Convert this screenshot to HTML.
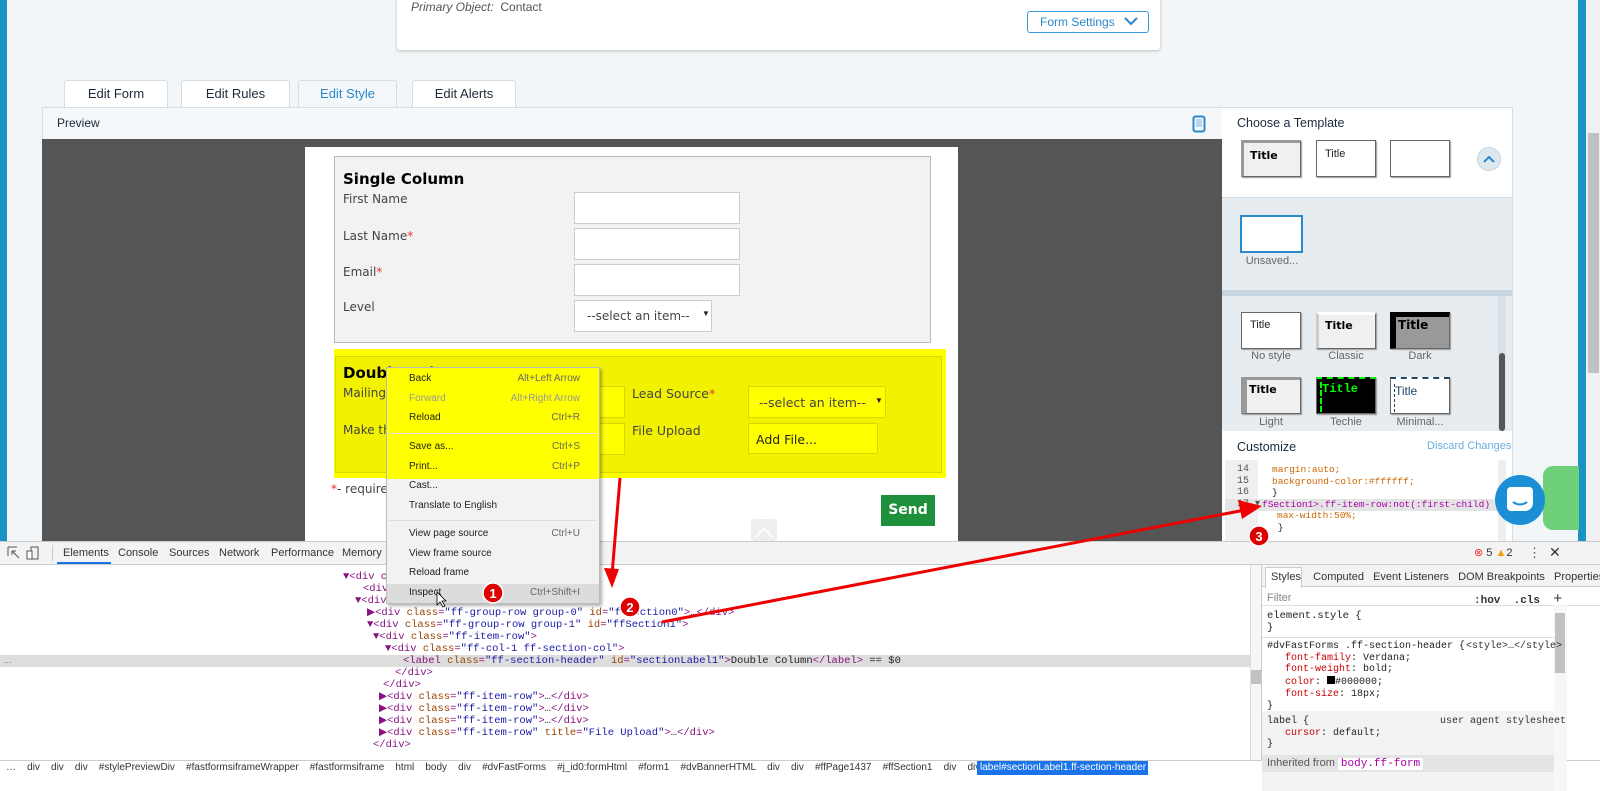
<!DOCTYPE html>
<html><head><meta charset="utf-8"><style>
*{box-sizing:border-box;margin:0;padding:0}
body{width:1600px;height:791px;overflow:hidden;position:relative;background:#f3f6f8;font-family:"Liberation Sans",sans-serif;font-size:12px;color:#222}
.a{position:absolute}
.t{position:absolute;white-space:nowrap}
.tab{position:absolute;top:80px;height:27px;background:#fff;border:1px solid #d5dde3;border-bottom:none;border-radius:3px 3px 0 0;text-align:center;line-height:26px;font-size:13px;color:#1a2a3a}
.inp{position:absolute;background:#fff;border:1px solid #ccc;height:32px}
.fl{position:absolute;font-family:"DejaVu Sans",sans-serif;font-size:12px;color:#444}
.req{color:#e33}
.th{position:absolute;width:60px;height:37px;background:#fff;border:1px solid #666;box-shadow:1px 1px 1px #999;font-size:11px}
.lbl{position:absolute;width:80px;text-align:center;font-size:11px;color:#666}
.mi{position:absolute;left:23px;font-size:10px;color:#222}
.ms{position:absolute;right:20px;font-size:10px;color:#666}
.dom{position:absolute;font-family:"Liberation Mono",monospace;font-size:10.5px;white-space:nowrap;color:#881280}
.dom div{height:12px;line-height:12px}
.dom .at{color:#994500}.dom .v{color:#1a1aa6}.dom .x{color:#222}
.st{position:absolute;font-family:"Liberation Mono",monospace;font-size:10.5px;white-space:nowrap;color:#222}
.p{color:#c80000}
.dt{position:absolute;top:547px;font-size:11px;color:#333}
</style></head><body>
<div class="a" style="left:0;top:0;width:7px;height:541px;background:#1a94c4"></div>
<div class="a" style="left:1578px;top:0;width:8px;height:541px;background:#1a94c4"></div>
<div class="a" style="left:1587px;top:0;width:13px;height:541px;background:#f0f0f0"></div>
<div class="a" style="left:1588px;top:133px;width:11px;height:240px;background:#c1c1c1"></div>

<!-- top card -->
<div class="a" style="left:397px;top:-4px;width:763px;height:54px;background:#fff;box-shadow:0 1px 3px #bbb;border-radius:3px"></div>
<div class="t" style="left:411px;top:0;font-size:12px;color:#555"><i>Primary Object:</i>&nbsp; Contact</div>
<div class="a" style="left:1027px;top:11px;width:122px;height:22px;border:1px solid #3a9ad9;border-radius:3px;color:#2a88cc;font-size:12px;line-height:20px;padding-left:12px;background:#fff">Form Settings <svg class="a" style="left:96px;top:4px" width="14" height="10"><path d="M1 2 L7 8 L13 2" stroke="#2a88cc" stroke-width="2" fill="none"/></svg></div>

<div class="tab" style="left:64px;width:104px">Edit Form</div>
<div class="tab" style="left:181px;width:109px">Edit Rules</div>
<div class="tab" style="left:298px;width:99px;color:#2a88cc;background:#f5f8fa;height:28px">Edit Style</div>
<div class="tab" style="left:412px;width:104px">Edit Alerts</div>

<!-- main panel -->
<div class="a" style="left:42px;top:107px;width:1471px;height:434px;background:#f5f8fa;border:1px solid #d5dde3"></div>
<div class="t" style="left:57px;top:116px;font-size:12px;color:#1a2a3a">Preview</div>
<svg class="a" style="left:1192px;top:115px" width="14" height="18"><rect x="1.5" y="1.5" width="11" height="15" rx="2" fill="none" stroke="#2a88cc" stroke-width="2"/><rect x="4" y="4" width="6" height="8" fill="#2a88cc" opacity=".3"/></svg>
<div class="a" style="left:42px;top:139px;width:1180px;height:402px;background:#555"></div>
<div class="a" style="left:305px;top:147px;width:653px;height:394px;background:#fff"></div>

<div class="a" style="left:334px;top:156px;width:597px;height:187px;background:#f2f2f2;border:1px solid #bbb"></div>
<div class="t" style="left:343px;top:170px;font-family:'DejaVu Sans',sans-serif;font-weight:bold;font-size:15px;color:#000">Single Column</div>
<div class="fl" style="left:343px;top:192px">First Name</div>
<div class="fl" style="left:343px;top:229px">Last Name<span class="req">*</span></div>
<div class="fl" style="left:343px;top:265px">Email<span class="req">*</span></div>
<div class="fl" style="left:343px;top:300px">Level</div>
<div class="inp" style="left:574px;top:192px;width:166px"></div>
<div class="inp" style="left:574px;top:228px;width:166px"></div>
<div class="inp" style="left:574px;top:264px;width:166px"></div>
<div class="inp" style="left:574px;top:300px;width:138px"><span class="fl" style="left:12px;top:8px">--select an item--</span><span class="a" style="left:127px;top:8px;font-size:8px">▼</span></div>

<!-- yellow section -->
<div class="a" style="left:334px;top:349px;width:612px;height:129px;background:#ffff00"></div>
<div class="a" style="left:335px;top:356px;width:607px;height:117px;background:#f2f200;border:1px solid #d8d800"></div>
<div class="t" style="left:343px;top:364px;font-family:'DejaVu Sans',sans-serif;font-weight:bold;font-size:15px;color:#000">Double Column</div>
<div class="fl" style="left:343px;top:386px">Mailing</div>
<div class="fl" style="left:343px;top:423px">Make th</div>
<div class="inp" style="left:570px;top:386px;width:55px;background:#ffff00;border-color:#d8d800"></div>
<div class="inp" style="left:570px;top:423px;width:55px;background:#ffff00;border-color:#d8d800"></div>
<div class="fl" style="left:632px;top:386px;font-size:12.5px">Lead Source<span class="req">*</span></div>
<div class="fl" style="left:632px;top:423px;font-size:12.5px">File Upload</div>
<div class="inp" style="left:748px;top:386px;width:138px;background:#ffff00;border-color:#d8d800"><span class="fl" style="left:10px;top:8px;font-size:12.5px">--select an item--</span><span class="a" style="left:126px;top:9px;font-size:8px">▼</span></div>
<div class="inp" style="left:748px;top:423px;width:130px;height:31px;background:#ffff00;border-color:#d8d800"><span class="fl" style="left:7px;top:8px;font-size:12.5px;color:#222">Add File...</span></div>
<div class="fl" style="left:331px;top:482px"><span class="req">*</span>- required</div>
<div class="a" style="left:881px;top:495px;width:54px;height:31px;background:#1e8f3a;color:#fff;font-weight:bold;font-size:14px;text-align:center;line-height:31px;font-family:'DejaVu Sans',sans-serif">Send</div>
<div class="a" style="left:751px;top:519px;width:26px;height:22px;background:#eee;border-radius:3px"><svg width="26" height="22"><path d="M5 18 L13 9 L21 18" stroke="#fff" stroke-width="2" fill="none"/></svg></div>

<!-- right panel -->
<div class="a" style="left:1222px;top:108px;width:290px;height:89px;background:#fff"></div>
<div class="t" style="left:1237px;top:116px;font-size:12.5px;color:#1a2a3a">Choose a Template</div>
<div class="th" style="left:1241px;top:140px;background:#f0f0f0;border-top:3px solid #999;border-left:3px solid #999"><b style="position:absolute;left:6px;top:6px;font-family:'DejaVu Sans';color:#000">Title</b></div>
<div class="th" style="left:1316px;top:140px"><span style="position:absolute;left:8px;top:7px">Title</span></div>
<div class="th" style="left:1390px;top:140px"></div>
<div class="a" style="left:1477px;top:147px;width:24px;height:24px;border-radius:50%;background:#dde8ef;border:1px solid #c8d4dc"><svg width="22" height="22"><path d="M6 14 L11 9 L16 14" stroke="#2a88cc" stroke-width="2" fill="none"/></svg></div>
<div class="a" style="left:1222px;top:197px;width:290px;height:93px;background:#e6ecf0;border-top:1px solid #d0dce4"></div>
<div class="a" style="left:1240px;top:215px;width:63px;height:38px;background:#fff;border:2px solid #2a88cc"></div>
<div class="lbl" style="left:1232px;top:255px">Unsaved...</div>
<div class="a" style="left:1222px;top:290px;width:290px;height:6px;background:#c6d5df"></div>
<div class="a" style="left:1222px;top:296px;width:290px;height:135px;background:#e6ecf0"></div>
<div class="a" style="left:1498px;top:296px;width:8px;height:135px;background:#d8e2e8"></div>
<div class="a" style="left:1499px;top:353px;width:6px;height:78px;background:#555;border-radius:3px"></div>
<div class="th" style="left:1241px;top:312px"><span style="position:absolute;left:8px;top:6px">Title</span></div>
<div class="th" style="left:1316px;top:312px;background:#f0f0f0;border-top:3px solid #fff;border-left:3px solid #ccc"><b style="position:absolute;left:6px;top:4px;font-family:'DejaVu Sans';color:#000">Title</b></div>
<div class="th" style="left:1390px;top:312px;background:#999;border-top:5px solid #000;border-left:6px solid #000"><b style="position:absolute;left:2px;top:1px;font-family:'DejaVu Sans';color:#000;font-size:12px">Title</b></div>
<div class="lbl" style="left:1231px;top:350px">No style</div>
<div class="lbl" style="left:1306px;top:350px">Classic</div>
<div class="lbl" style="left:1380px;top:350px">Dark</div>
<div class="th" style="left:1241px;top:377px;background:#f0f0f0;border-top:3px solid #999;border-left:6px solid #999"><b style="position:absolute;left:2px;top:3px;font-family:'DejaVu Sans';color:#000">Title</b></div>
<div class="th" style="left:1316px;top:377px;background:#000;border-top:2px dashed #0f0"><b style="position:absolute;left:3px;top:3px;font-family:'Liberation Mono';color:#0f0;font-size:12px;border-left:2px dashed #0f0;height:30px">Title</b></div>
<div class="th" style="left:1390px;top:377px;border-top:2px dashed #246"><span style="position:absolute;left:3px;top:5px;color:#246;border-left:1px dashed #246;font-size:12px;height:28px">Title</span></div>
<div class="lbl" style="left:1231px;top:416px">Light</div>
<div class="lbl" style="left:1306px;top:416px">Techie</div>
<div class="lbl" style="left:1380px;top:416px">Minimal...</div>
<div class="a" style="left:1222px;top:431px;width:290px;height:110px;background:#fff"></div>
<div class="t" style="left:1237px;top:440px;font-size:12.5px;color:#1a2a3a">Customize</div>
<div class="t" style="left:1427px;top:440px;font-size:11px;color:#6aaee0">Discard Changes</div>
<div class="a" style="left:1225px;top:460px;width:33px;height:81px;background:#f0f0f0"></div>
<div class="a" style="left:1225px;top:499px;width:280px;height:12px;background:#e4e4e4"></div>
<div class="st" style="left:1237px;top:464px;color:#555;line-height:11.6px;font-size:10px">14<br>15<br>16<br>17 ▾</div>
<div class="st" style="left:1272px;top:464px;line-height:11.6px;font-size:9.5px"><span style="color:#c60">margin:auto;</span><br><span style="color:#c60">background-color:#ffffff;</span><br>}<br><span style="margin-left:-10px;color:#a0a">fSection1&gt;.ff-item-row:not(:first-child)</span><br><span style="margin-left:5px;color:#c60">max-width:50%;</span><br>&nbsp;}</div>
<div class="a" style="left:1498px;top:460px;width:8px;height:81px;background:#eee"></div>
<div class="a" style="left:1543px;top:466px;width:36px;height:64px;background:#6fd07a;border-radius:10px 0 0 10px"></div>
<div class="a" style="left:1495px;top:475px;width:50px;height:50px;border-radius:50%;background:#1b8fd6"></div>
<div class="a" style="left:1507px;top:487px;width:26px;height:24px;background:#fff;border-radius:4px 4px 8px 4px"><svg width="26" height="24"><path d="M6 15 Q13 20 20 15" stroke="#1b8fd6" stroke-width="2" fill="none"/></svg></div>

<!-- devtools -->
<div class="a" style="left:0;top:541px;width:1600px;height:250px;background:#fff"></div>
<div class="a" style="left:0;top:541px;width:1600px;height:24px;background:#f3f3f3;border-top:1px solid #ccc;border-bottom:1px solid #ccc"></div>
<svg class="a" style="left:7px;top:546px" width="36" height="14"><path d="M1 1 H10 M1 1 V10 M5 5 L12 12 M5 5 H9 M5 5 V9" stroke="#555" fill="none"/><rect x="24" y="1" width="7" height="12" fill="none" stroke="#555"/><rect x="20" y="5" width="5" height="8" fill="#fff" stroke="#555"/></svg>
<div class="a" style="left:52px;top:545px;width:1px;height:16px;background:#ccc"></div>
<div class="dt" style="left:63px">Elements</div>
<div class="a" style="left:57px;top:562px;width:54px;height:2px;background:#1a73e8"></div>
<div class="dt" style="left:118px">Console</div>
<div class="dt" style="left:169px">Sources</div>
<div class="dt" style="left:219px">Network</div>
<div class="dt" style="left:271px">Performance</div>
<div class="dt" style="left:342px">Memory</div>
<div class="t" style="left:1474px;top:546px;font-size:11px;color:#333"><span style="color:#e33">⊗</span> 5 <span style="color:#f5a300">▲</span>2</div>
<div class="t" style="left:1528px;top:545px;font-size:13px;color:#555">⋮</div>
<div class="t" style="left:1549px;top:544px;font-size:14px;color:#333">✕</div>

<div class="a" style="left:0;top:655px;width:1250px;height:12px;background:#ddd"></div>
<div class="t" style="left:4px;top:655px;font-size:9px;color:#777">...</div>
<div class="dom" style="left:343px;top:571px">
<div style="margin-left:0">▼&lt;div c</div>
<div style="margin-left:20px">&lt;div</div>
<div style="margin-left:12px">▼&lt;div</div>
<div style="margin-left:24px">▶&lt;div <span class="at">class</span>=<span class="v">"ff-group-row group-0"</span> <span class="at">id</span>=<span class="v">"ffSection0"</span>&gt;<span class="x">…</span>&lt;/div&gt;</div>
<div style="margin-left:24px">▼&lt;div <span class="at">class</span>=<span class="v">"ff-group-row group-1"</span> <span class="at">id</span>=<span class="v">"ffSection1"</span>&gt;</div>
<div style="margin-left:30px">▼&lt;div <span class="at">class</span>=<span class="v">"ff-item-row"</span>&gt;</div>
<div style="margin-left:42px">▼&lt;div <span class="at">class</span>=<span class="v">"ff-col-1 ff-section-col"</span>&gt;</div>
<div style="margin-left:60px">&lt;label <span class="at">class</span>=<span class="v">"ff-section-header"</span> <span class="at">id</span>=<span class="v">"sectionLabel1"</span>&gt;<span class="x">Double Column</span>&lt;/label&gt; <span class="x">== $0</span></div>
<div style="margin-left:52px">&lt;/div&gt;</div>
<div style="margin-left:40px">&lt;/div&gt;</div>
<div style="margin-left:36px">▶&lt;div <span class="at">class</span>=<span class="v">"ff-item-row"</span>&gt;<span class="x">…</span>&lt;/div&gt;</div>
<div style="margin-left:36px">▶&lt;div <span class="at">class</span>=<span class="v">"ff-item-row"</span>&gt;<span class="x">…</span>&lt;/div&gt;</div>
<div style="margin-left:36px">▶&lt;div <span class="at">class</span>=<span class="v">"ff-item-row"</span>&gt;<span class="x">…</span>&lt;/div&gt;</div>
<div style="margin-left:36px">▶&lt;div <span class="at">class</span>=<span class="v">"ff-item-row"</span> <span class="at">title</span>=<span class="v">"File Upload"</span>&gt;<span class="x">…</span>&lt;/div&gt;</div>
<div style="margin-left:30px">&lt;/div&gt;</div>
</div>
<div class="a" style="left:1250px;top:565px;width:12px;height:196px;background:#f7f7f7;border-left:1px solid #ddd;border-right:1px solid #ccc"></div>
<div class="a" style="left:1251px;top:670px;width:10px;height:14px;background:#c1c1c1"></div>
<div class="a" style="left:0;top:760px;width:1600px;height:16px;background:#fff;border-top:1px solid #ccc"></div>
<div class="t" style="left:6px;top:762px;font-size:10px;color:#333">…&nbsp;&nbsp;&nbsp; div&nbsp;&nbsp;&nbsp; div&nbsp;&nbsp;&nbsp; div&nbsp;&nbsp;&nbsp; #stylePreviewDiv&nbsp;&nbsp;&nbsp; #fastformsiframeWrapper&nbsp;&nbsp;&nbsp; #fastformsiframe&nbsp;&nbsp;&nbsp; html&nbsp;&nbsp;&nbsp; body&nbsp;&nbsp;&nbsp; div&nbsp;&nbsp;&nbsp; #dvFastForms&nbsp;&nbsp;&nbsp; #j_id0:formHtml&nbsp;&nbsp;&nbsp; #form1&nbsp;&nbsp;&nbsp; #dvBannerHTML&nbsp;&nbsp;&nbsp; div&nbsp;&nbsp;&nbsp; div&nbsp;&nbsp;&nbsp; #ffPage1437&nbsp;&nbsp;&nbsp; #ffSection1&nbsp;&nbsp;&nbsp; div&nbsp;&nbsp;&nbsp; div</div>
<div class="a" style="left:977px;top:761px;width:171px;height:14px;background:#1a73e8;color:#fff;font-size:10px;line-height:14px;padding-left:3px;white-space:nowrap;overflow:hidden">label#sectionLabel1.ff-section-header</div>

<!-- styles pane -->
<div class="a" style="left:1262px;top:565px;width:338px;height:22px;background:#f3f3f3;border-bottom:1px solid #ccc"></div>
<div class="a" style="left:1265px;top:567px;width:37px;height:21px;background:#fff;border:1px solid #ccc;border-bottom:none"></div>
<div class="t" style="left:1271px;top:571px;font-size:11px;color:#333">Styles&nbsp;&nbsp;&nbsp; Computed&nbsp;&nbsp; Event Listeners&nbsp;&nbsp; DOM Breakpoints&nbsp;&nbsp; Properties</div>
<div class="t" style="left:1267px;top:592px;font-size:11px;color:#888">Filter</div>
<div class="t" style="left:1474px;top:591px;font-size:11px;color:#333;font-family:'Liberation Mono'"><b>:hov</b>&nbsp; <b>.cls</b>&nbsp; <span style="font-size:15px">+</span></div>
<div class="a" style="left:1262px;top:605px;width:338px;height:1px;background:#ddd"></div>
<div class="a" style="left:1554px;top:605px;width:13px;height:186px;background:#f7f7f7"></div>
<div class="a" style="left:1555px;top:613px;width:10px;height:60px;background:#c1c1c1"></div>
<div class="st" style="left:1267px;top:611px;line-height:11.7px">element.style {<br>}</div>
<div class="a" style="left:1262px;top:637px;width:292px;height:1px;background:#ddd"></div>
<div class="st" style="left:1267px;top:641px;line-height:11.7px;font-size:10px">#dvFastForms .ff-section-header {<br>&nbsp;&nbsp;&nbsp;<span class="p">font-family</span>: Verdana;<br>&nbsp;&nbsp;&nbsp;<span class="p">font-weight</span>: bold;<br>&nbsp;&nbsp;&nbsp;<span class="p">color</span>: <span style="display:inline-block;width:8px;height:8px;background:#000"></span>#000000;<br>&nbsp;&nbsp;&nbsp;<span class="p">font-size</span>: 18px;<br>}</div>
<div class="t" style="left:1466px;top:641px;font-family:'Liberation Mono';font-size:10px;color:#333">&lt;style&gt;…&lt;/style&gt;</div>
<div class="a" style="left:1262px;top:711px;width:292px;height:80px;background:#f3f3f3"></div>
<div class="st" style="left:1267px;top:716px;line-height:11.7px;font-size:10px">label {<br>&nbsp;&nbsp;&nbsp;<span class="p">cursor</span>: default;<br>}</div>
<div class="t" style="left:1440px;top:716px;font-family:'Liberation Mono';font-size:10px;color:#333">user agent stylesheet</div>
<div class="a" style="left:1262px;top:755px;width:292px;height:17px;background:#e4e4e4"></div>
<div class="t" style="left:1267px;top:757px;font-size:11px;color:#555">Inherited from <span style="background:#fff;padding:0 3px;color:#a0a;font-family:'Liberation Mono'">body.ff-form</span></div>

<!-- context menu (on top) -->
<div class="a" style="left:386px;top:367px;width:214px;height:237px;background:linear-gradient(#ffff00 0 111px,#f2f2f2 111px);border:1px solid #bbb;box-shadow:2px 2px 3px rgba(0,0,0,.3)"></div>
<div class="a" style="left:387px;top:584px;width:212px;height:19px;background:#dcdcdc"></div>
<div class="a" style="left:389px;top:433px;width:208px;height:1px;background:#ddd"></div>
<div class="a" style="left:389px;top:520px;width:208px;height:1px;background:#ddd"></div>
<div class="a" style="left:386px;top:367px;width:214px;height:237px">
<div class="mi" style="top:6px">Back</div><div class="ms" style="top:6px">Alt+Left Arrow</div>
<div class="mi" style="top:26px;color:#999">Forward</div><div class="ms" style="top:26px;color:#999">Alt+Right Arrow</div>
<div class="mi" style="top:45px">Reload</div><div class="ms" style="top:45px">Ctrl+R</div>
<div class="mi" style="top:74px">Save as...</div><div class="ms" style="top:74px">Ctrl+S</div>
<div class="mi" style="top:94px">Print...</div><div class="ms" style="top:94px">Ctrl+P</div>
<div class="mi" style="top:113px">Cast...</div>
<div class="mi" style="top:133px">Translate to English</div>
<div class="mi" style="top:161px">View page source</div><div class="ms" style="top:161px">Ctrl+U</div>
<div class="mi" style="top:181px">View frame source</div>
<div class="mi" style="top:200px">Reload frame</div>
<div class="mi" style="top:220px">Inspect</div><div class="ms" style="top:220px">Ctrl+Shift+I</div>
</div>

<!-- annotations -->
<svg class="a" style="left:0;top:0" width="1600" height="791">
<line x1="620" y1="478" x2="612" y2="575" stroke="#e00" stroke-width="3"/>
<path d="M604 568 L612 588 L619 569 Z" fill="#e00"/>
<line x1="662" y1="622" x2="1245" y2="510" stroke="#e00" stroke-width="3"/>
<path d="M1238 500 L1262 506 L1242 519 Z" fill="#e00"/>
<g font-family="Liberation Sans" font-weight="bold" font-size="13" fill="#fff" text-anchor="middle">
<circle cx="493" cy="593" r="10" fill="#d00" stroke="#fff" stroke-width="1.5"/><text x="493" y="598">1</text>
<circle cx="630" cy="607" r="10" fill="#d00" stroke="#fff" stroke-width="1.5"/><text x="630" y="612">2</text>
<circle cx="1259" cy="536" r="10" fill="#d00" stroke="#fff" stroke-width="1.5"/><text x="1259" y="541">3</text>
</g>
<path d="M437 592 L437 605 L440 602 L443 607 L445 606 L442 601 L446 601 Z" fill="#fff" stroke="#000" stroke-width=".8"/>
</svg>
</body></html>
